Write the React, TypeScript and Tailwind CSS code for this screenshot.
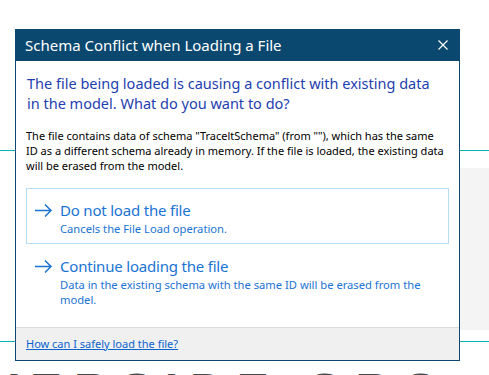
export default function App() {
  return (
    <div className="relative h-[375px] w-[489px] overflow-hidden bg-white font-['Noto_Sans',sans-serif]">
      {/* page behind the dialog */}
      <div className="h-[150px]" />
      <div className="h-px bg-[#00b7b1]" />
      <div className="mt-[17px] flex justify-end">
        <div className="h-[162px] w-[29px] bg-[#f4f4f4]" />
      </div>
      <div className="mt-[11px] h-px bg-[#00b7b1]" />
      <div className="mt-[25px] -ml-[14px] whitespace-nowrap font-['Liberation_Sans',sans-serif] text-[48px] font-bold leading-none tracking-[12px] text-[#4a4a4a]">
        VERSIDE GRO
      </div>

      <Dialog />
    </div>
  )
}

function Dialog() {
  return (
    <div className="absolute left-[15px] top-[29px] flex w-[445px] flex-col border border-[#0b4870] bg-white">
      <div className="flex h-[31px] items-center justify-between bg-[#0b4870] pl-[9px] pr-[11px] text-[15px] text-white">
        <span className="-mt-px">Schema Conflict when Loading a File</span>
        <svg width="10" height="10" viewBox="0 0 10 10" className="mb-px">
          <path d="M0.5 0.5L9.5 9.5M9.5 0.5L0.5 9.5" stroke="white" strokeWidth="1.2" />
        </svg>
      </div>

      <div className="px-[10px] pb-[12px] pt-[12px]">
        <p className="whitespace-nowrap pl-px text-[14.5px] leading-[20px] text-[#1e40af]">
          The file being loaded is causing a conflict with existing data
          <br />
          in the model. What do you want to do?
        </p>
        <p className="mt-[15px] whitespace-nowrap text-[11px] leading-[15px] text-black">
          The file contains data of schema "TraceltSchema" (from ""), which has the same
          <br />
          ID as a different schema already in memory. If the file is loaded, the existing data
          <br />
          will be erased from the model.
        </p>

        <div className="mt-[15px] flex flex-col">
          <Option
            active
            title="Do not load the file"
            lines={['Cancels the File Load operation.']}
          />
          <Option
            title="Continue loading the file"
            lines={['Data in the existing schema with the same ID will be erased from the', 'model.']}
          />
        </div>
      </div>

      <div className="flex h-[33px] items-center border-t border-[#dcdcdc] bg-[#f0f0f0] px-[10px]">
        <a className="text-[11px] leading-[16px] text-[#0b63ce] underline">How can I safely load the file?</a>
      </div>
    </div>
  )
}

function Option({ title, lines, active }: { title: string; lines: string[]; active?: boolean }) {
  return (
    <div
      className={
        'flex gap-[8px] border pb-[7px] pl-[7px] pt-[10px] ' +
        (active ? 'border-[#b7dcf5]' : 'border-transparent')
      }
    >
      <svg width="18" height="22" viewBox="0 0 18 22" className="shrink-0">
        <path d="M1 11.5H17M11 5.5L17 11.5L11 17.5" stroke="#1a73d4" strokeWidth="1.5" fill="none" />
      </svg>
      <div className="flex flex-col whitespace-nowrap text-[#1a73d4]">
        <span className="text-[15px] leading-[22px] tracking-[-0.2px]">{title}</span>
        {lines.map((l) => (
          <span key={l} className="text-[11.2px] leading-[15px]">
            {l}
          </span>
        ))}
      </div>
    </div>
  )
}
